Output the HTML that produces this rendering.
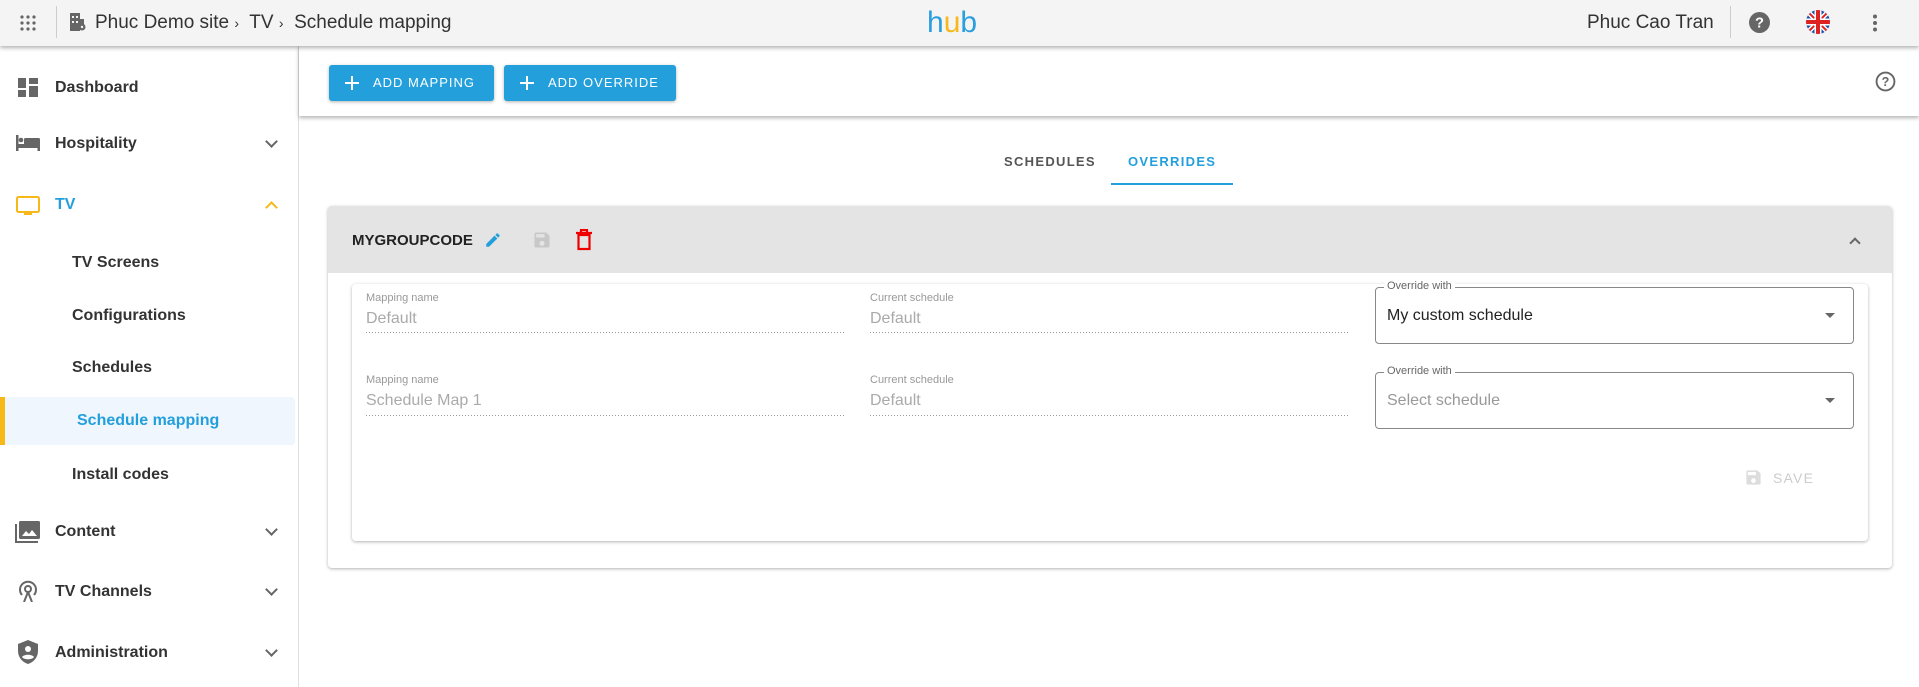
<!DOCTYPE html>
<html><head><meta charset="utf-8"><style>
*{box-sizing:border-box;margin:0;padding:0}
body{width:1919px;height:687px;overflow:hidden;background:#fff;font-family:"Liberation Sans",sans-serif;color:#222;position:relative}
.a{position:absolute}
.hdr{left:0;top:0;width:1919px;height:46px;background:#f4f4f4;box-shadow:0 2px 4px rgba(0,0,0,.3);z-index:3}
.side{left:0;top:46px;width:299px;height:641px;border-right:1px solid #e0e0e0}
.tb{left:299px;top:46px;width:1620px;height:70px;background:#fff;box-shadow:0 2px 4px rgba(0,0,0,.3);z-index:2}
.btn{height:36px;top:65px;background:#239fdc;color:#fff;border-radius:3px;font-size:13px;letter-spacing:1px;line-height:36px;box-shadow:0 1px 3px rgba(0,0,0,.3);padding-left:44px}
.btn:before{content:"";position:absolute;left:16px;width:14px;height:2px;background:#fff;top:17px}
.btn:after{content:"";position:absolute;left:22px;top:11px;width:2px;height:14px;background:#fff}
.si{font-size:16px;font-weight:bold;color:#333;transform:translateY(-50%)}
.chev{width:9px;height:9px;border-right:2px solid #666;border-bottom:2px solid #666;transform:rotate(45deg)}
.lbl{font-size:11px;color:#999}
.val{font-size:16px;color:#aaa}
.dot{height:1px;background:repeating-linear-gradient(90deg,#999 0 1px,transparent 1px 3px)}
.sel{border:1px solid #888;border-radius:4px;left:1375px;width:479px;height:57px}
.sel .l{position:absolute;left:8px;top:-8px;background:#fff;padding:0 3px;font-size:11px;color:#666}
.sel .v{position:absolute;left:11px;top:19px;font-size:16px}
.sel .ar{position:absolute;right:18px;top:25px;border-left:5px solid transparent;border-right:5px solid transparent;border-top:5px solid #666}
</style></head><body>
<div class="a hdr">
 <svg class="a" style="left:20px;top:15px" width="16" height="16" viewBox="0 0 16 16" fill="#666"><circle cx="2" cy="2" r="1.6"/><circle cx="8" cy="2" r="1.6"/><circle cx="14" cy="2" r="1.6"/><circle cx="2" cy="8" r="1.6"/><circle cx="8" cy="8" r="1.6"/><circle cx="14" cy="8" r="1.6"/><circle cx="2" cy="14" r="1.6"/><circle cx="8" cy="14" r="1.6"/><circle cx="14" cy="14" r="1.6"/></svg>
 <div class="a" style="left:56px;top:6px;width:1px;height:32px;background:#ccc"></div>
 <svg class="a" style="left:70px;top:13px" width="16" height="20" viewBox="0 0 16 20" fill="#666"><rect x="0" y="0" width="10" height="18"/><rect x="10" y="6" width="4" height="6"/><circle cx="12" cy="14" r="3.5"/><circle cx="12" cy="14" r="1.2" fill="#f4f4f4"/><rect x="2" y="3" width="2" height="2" fill="#f4f4f4"/><rect x="6" y="3" width="2" height="2" fill="#f4f4f4"/><rect x="2" y="8" width="2" height="2" fill="#f4f4f4"/><rect x="6" y="8" width="2" height="2" fill="#f4f4f4"/></svg>
 <div class="a" style="left:95px;top:12px;font-size:19px;color:#333;white-space:nowrap">Phuc Demo site <span style="font-size:14px">›</span>&nbsp; TV <span style="font-size:14px">›</span>&nbsp; Schedule mapping</div>
 <div class="a" style="left:927px;top:5px;font-size:30px;color:#2a9fe0;letter-spacing:0px;line-height:36px">h<span style="color:#f7b819">u</span>b</div>
 <div class="a" style="left:1587px;top:12px;font-size:19px;color:#333">Phuc Cao Tran</div>
 <div class="a" style="left:1730px;top:6px;width:1px;height:32px;background:#ccc"></div>
 <svg class="a" style="left:1749px;top:12px" width="21" height="21" viewBox="0 0 20 20"><circle cx="10" cy="10" r="10" fill="#666"/><text x="10" y="15" font-size="14" font-weight="bold" fill="#fff" text-anchor="middle" font-family="Liberation Sans">?</text></svg>
 <svg class="a" style="left:1806px;top:10px" width="24" height="24" viewBox="0 0 24 24"><defs><clipPath id="c"><circle cx="12" cy="12" r="12"/></clipPath></defs><g clip-path="url(#c)"><rect width="24" height="24" fill="#1f4fa8"/><path d="M0 0L24 24M24 0L0 24" stroke="#fff" stroke-width="5"/><path d="M0 0L24 24M24 0L0 24" stroke="#d22" stroke-width="2"/><path d="M12 0V24M0 12H24" stroke="#fff" stroke-width="7"/><path d="M12 0V24M0 12H24" stroke="#d22" stroke-width="4"/></g></svg>
 <svg class="a" style="left:1872px;top:14px" width="6" height="18" viewBox="0 0 6 18" fill="#666"><circle cx="3" cy="2.5" r="2"/><circle cx="3" cy="9" r="2"/><circle cx="3" cy="15.5" r="2"/></svg>
</div>
<div class="a side"></div>
<div class="a tb">
 <svg class="a" style="left:1576px;top:25px" width="21" height="21" viewBox="0 0 20 20"><circle cx="10" cy="10" r="8.5" fill="none" stroke="#666" stroke-width="1.8"/><text x="10" y="14.5" font-size="12" font-weight="bold" fill="#666" text-anchor="middle" font-family="Liberation Sans">?</text></svg>
</div>
<div class="a btn" style="left:329px;width:165px;z-index:4">ADD MAPPING</div>
<div class="a btn" style="left:504px;width:172px;z-index:4">ADD OVERRIDE</div>

<svg class="a" style="left:18px;top:78px" width="20" height="19" viewBox="0 0 20 19" fill="#666"><rect x="0" y="0" width="8" height="10"/><rect x="11" y="0" width="9" height="6"/><rect x="0" y="12" width="8" height="7"/><rect x="11" y="8" width="9" height="11"/></svg>
<div class="a si" style="left:55px;top:88px">Dashboard</div>
<svg class="a" style="left:16px;top:135px" width="24" height="16" viewBox="0 0 24 16" fill="#666"><rect x="0" y="0" width="2.5" height="16"/><rect x="0" y="9" width="24" height="4"/><rect x="8" y="3" width="16" height="7" rx="1.5"/><circle cx="5" cy="5" r="2.3"/><rect x="21.5" y="9" width="2.5" height="7"/></svg>
<div class="a si" style="left:55px;top:144px">Hospitality</div>
<div class="a chev" style="left:267px;top:137px"></div>
<svg class="a" style="left:16px;top:196px" width="24" height="20" viewBox="0 0 24 20"><rect x="1" y="1" width="22" height="15" rx="1.5" fill="none" stroke="#f7b819" stroke-width="2"/><rect x="8" y="17" width="8" height="2" fill="#f7b819"/></svg>
<div class="a si" style="left:55px;top:205px;color:#239fdc">TV</div>
<div class="a chev" style="left:267px;top:203px;transform:rotate(225deg);border-color:#f7b819"></div>
<div class="a si" style="left:72px;top:263px">TV Screens</div>
<div class="a si" style="left:72px;top:316px">Configurations</div>
<div class="a si" style="left:72px;top:368px">Schedules</div>
<div class="a" style="left:0;top:397px;width:295px;height:48px;background:#eff6fd;border-radius:0 4px 4px 0"></div>
<div class="a" style="left:0;top:397px;width:5px;height:48px;background:#f7b819"></div>
<div class="a si" style="left:77px;top:421px;color:#239fdc">Schedule mapping</div>
<div class="a si" style="left:72px;top:475px">Install codes</div>
<svg class="a" style="left:15px;top:521px" width="25" height="22" viewBox="0 0 25 22" fill="#666"><path d="M0 3h2v17h21v2H0z"/><rect x="4" y="0" width="21" height="18" rx="1.5"/><path d="M7 15l4-5 3 3 3-4 5 6z" fill="#fff"/></svg>
<div class="a si" style="left:55px;top:532px">Content</div>
<div class="a chev" style="left:267px;top:525px"></div>
<svg class="a" style="left:17px;top:580px" width="22" height="22" viewBox="0 0 22 22" fill="none" stroke="#666" stroke-width="2"><circle cx="11" cy="9" r="3"/><path d="M5 15a8 8 0 1 1 12 0"/><path d="M11 12l-4 10M11 12l4 10"/></svg>
<div class="a si" style="left:55px;top:592px">TV Channels</div>
<div class="a chev" style="left:267px;top:585px"></div>
<svg class="a" style="left:18px;top:640px" width="20" height="24" viewBox="0 0 20 24" fill="#666"><path d="M10 0L20 4v7c0 6-4 11-10 13C4 22 0 17 0 11V4z"/><circle cx="10" cy="9" r="3" fill="#fff"/><path d="M4 17c2-3 10-3 12 0-2 3-10 3-12 0z" fill="#fff"/></svg>
<div class="a si" style="left:55px;top:653px">Administration</div>
<div class="a chev" style="left:267px;top:646px"></div>

<div class="a" style="left:1004px;top:154px;font-size:13px;font-weight:bold;letter-spacing:1.3px;color:#555">SCHEDULES</div>
<div class="a" style="left:1128px;top:154px;font-size:13px;font-weight:bold;letter-spacing:1.3px;color:#239fdc">OVERRIDES</div>
<div class="a" style="left:1111px;top:183px;width:122px;height:2px;background:#239fdc"></div>

<div class="a" style="left:328px;top:206px;width:1564px;height:362px;background:#fff;border-radius:4px;box-shadow:0 1px 3px rgba(0,0,0,.3)"></div>
<div class="a" style="left:328px;top:206px;width:1564px;height:67px;background:#e4e4e4;border-radius:4px 4px 0 0"></div>
<div class="a" style="left:352px;top:232px;font-size:15px;font-weight:bold;color:#222">MYGROUPCODE</div>
<svg class="a" style="left:484px;top:231px" width="18" height="18" viewBox="0 0 24 24" fill="#239fdc"><path d="M3 17.25V21h3.75L17.81 9.94l-3.75-3.75L3 17.25zM20.71 7.04a1 1 0 0 0 0-1.41l-2.34-2.34a1 1 0 0 0-1.41 0l-1.83 1.83 3.75 3.75 1.83-1.83z"/></svg>
<svg class="a" style="left:532px;top:230px" width="20" height="20" viewBox="0 0 24 24" fill="#c8c8c8"><path d="M17 3H5a2 2 0 0 0-2 2v14a2 2 0 0 0 2 2h14a2 2 0 0 0 2-2V7l-4-4zm-5 16a3 3 0 1 1 0-6 3 3 0 0 1 0 6zm3-10H5V5h10v4z"/></svg>
<svg class="a" style="left:575px;top:229px" width="18" height="22" viewBox="0 0 18 22" fill="none" stroke="#e00" stroke-width="2.2"><path d="M1 4h16M6 4V1h6v3"/><rect x="3.5" y="6" width="11" height="14"/></svg>
<div class="a chev" style="left:1851px;top:239px;transform:rotate(225deg);width:8px;height:8px"></div>

<div class="a" style="left:352px;top:284px;width:1516px;height:257px;background:#fff;border-radius:4px;box-shadow:0 1px 3px rgba(0,0,0,.3)"></div>
<div class="a lbl" style="left:366px;top:292px">Mapping name</div>
<div class="a val" style="left:366px;top:310px">Default</div>
<div class="a dot" style="left:366px;top:332px;width:480px"></div>
<div class="a lbl" style="left:870px;top:292px">Current schedule</div>
<div class="a val" style="left:870px;top:310px">Default</div>
<div class="a dot" style="left:870px;top:332px;width:480px"></div>
<div class="a lbl" style="left:366px;top:374px">Mapping name</div>
<div class="a val" style="left:366px;top:392px">Schedule Map 1</div>
<div class="a dot" style="left:366px;top:415px;width:480px"></div>
<div class="a lbl" style="left:870px;top:374px">Current schedule</div>
<div class="a val" style="left:870px;top:392px">Default</div>
<div class="a dot" style="left:870px;top:415px;width:480px"></div>
<div class="a sel" style="top:287px"><span class="l">Override with</span><span class="v" style="color:#222">My custom schedule</span><span class="ar"></span></div>
<div class="a sel" style="top:372px"><span class="l">Override with</span><span class="v" style="color:#999">Select schedule</span><span class="ar"></span></div>
<svg class="a" style="left:1744px;top:468px" width="19" height="19" viewBox="0 0 24 24" fill="#ddd"><path d="M17 3H5a2 2 0 0 0-2 2v14a2 2 0 0 0 2 2h14a2 2 0 0 0 2-2V7l-4-4zm-5 16a3 3 0 1 1 0-6 3 3 0 0 1 0 6zm3-10H5V5h10v4z"/></svg>
<div class="a" style="left:1773px;top:470px;font-size:14px;letter-spacing:1.2px;color:#ccc">SAVE</div>
</body></html>
